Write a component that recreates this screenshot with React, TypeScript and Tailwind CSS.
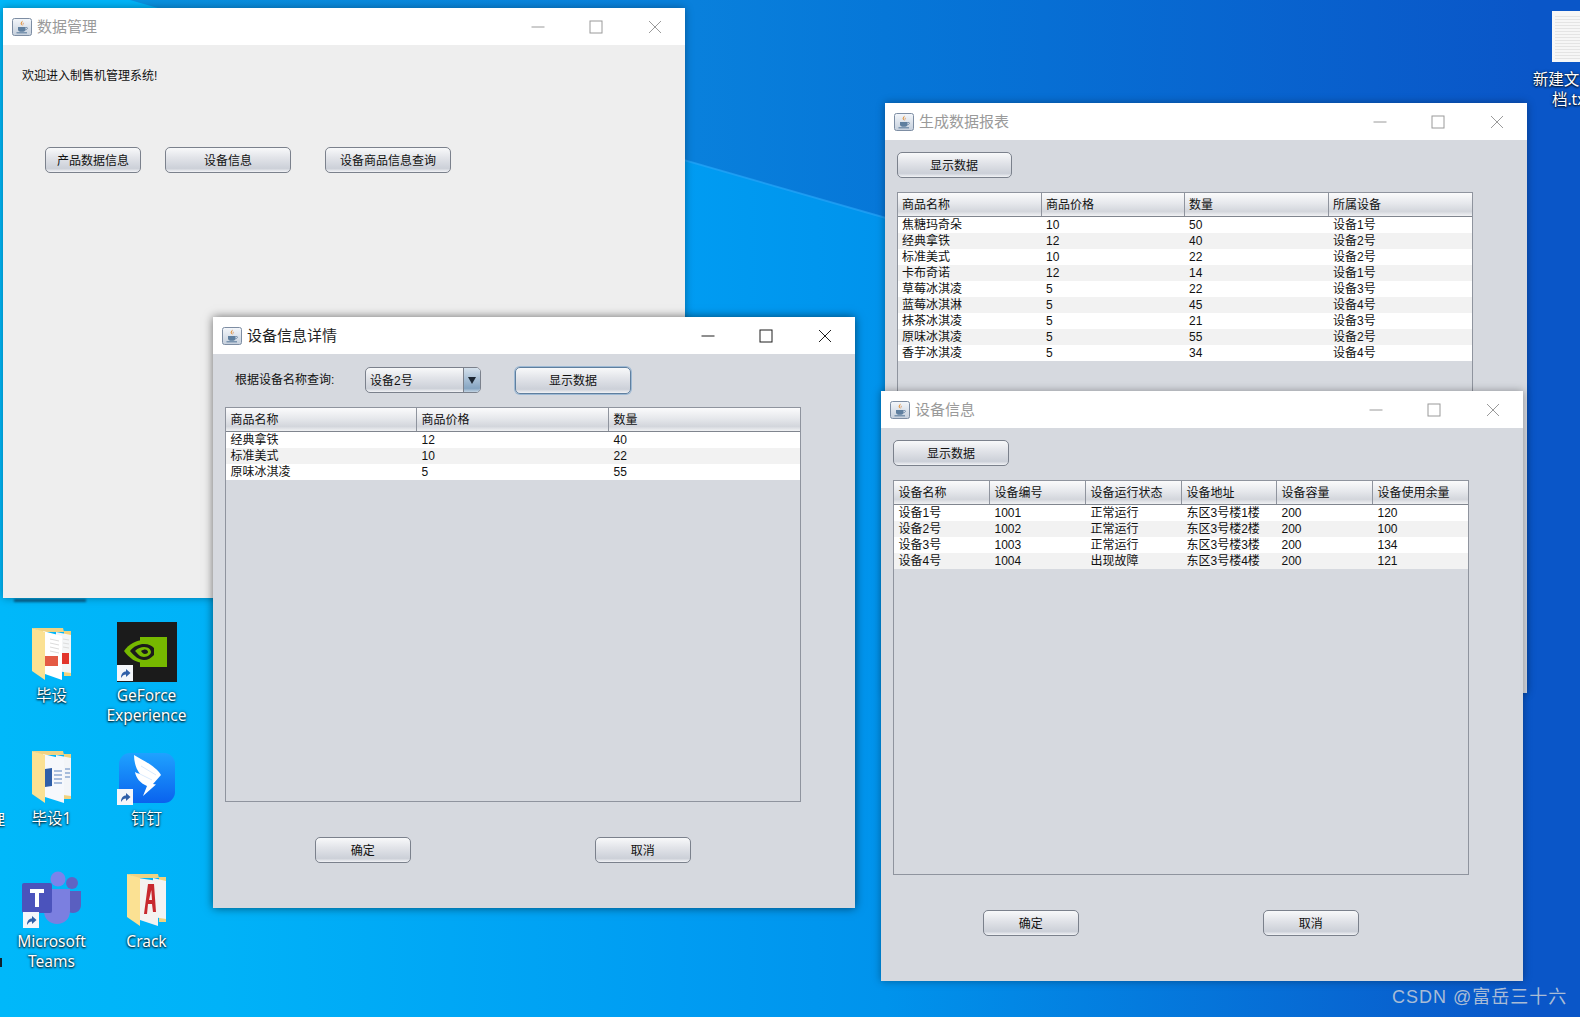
import React from 'react';

const uiFont = "font-['Liberation_Sans','Noto_Sans_CJK_SC',sans-serif]";
const desktopFont = "font-['Noto_Sans','Noto_Sans_CJK_SC',sans-serif]";

const JavaIcon: React.FC = () => (
  <svg width="20" height="18" viewBox="0 0 20 18" className="shrink-0">
    <defs>
      <linearGradient id="javaBg" x1="0" y1="0" x2="0" y2="1">
        <stop offset="0" stopColor="#f4f7fb" />
        <stop offset="1" stopColor="#c5cfdc" />
      </linearGradient>
    </defs>
    <rect x="0.5" y="0.5" width="19" height="17" rx="2" fill="url(#javaBg)" stroke="#7d8da3" />
    <path d="M10 2.500c1.600 1.300-1.200 2.400 0 4 .3.400.6.800.8 1.200-1.800-.7-2.800-2-1.800-3.200.6-.7 1.200-1.200 1-2z" fill="#e08a2c" />
    <path d="M11.500 4.500c.5.900-.8 1.700-.2 2.800-.8-.6-.9-1.900.2-2.800z" fill="#d9762a" />
    <path d="M6 9h7.500v2.500c0 1.500-1.300 2.300-3.700 2.300S6 13 6 11.500z" fill="#5f7f9f" />
    <path d="M13.500 9.500h1.300c1 0 1 2-1.500 2.400" fill="none" stroke="#5f7f9f" strokeWidth="0.8" />
    <path d="M4.500 14.800h10.500" stroke="#5f7f9f" strokeWidth="1.100" />
  </svg>
);

const WindowControls: React.FC<{ active?: boolean }> = ({ active }) => {
  const color = active ? '#1f1f1f' : '#9a9a9a';
  return (
    <div className="ml-auto flex h-full pr-[1px]">
      <div className="flex h-full w-[58.5px] items-center justify-center">
        <svg width="14" height="14" viewBox="0 0 14 14">
          <path d="M0.500 7h13" stroke={color} strokeWidth="1" />
        </svg>
      </div>
      <div className="flex h-full w-[58.5px] items-center justify-center">
        <svg width="14" height="14" viewBox="0 0 14 14">
          <rect x="1" y="1" width="12" height="12" fill="none" stroke={color} strokeWidth="1" />
        </svg>
      </div>
      <div className="flex h-full w-[58.5px] items-center justify-center">
        <svg width="14" height="14" viewBox="0 0 14 14">
          <path d="M1 1l12 12M13 1L1 13" stroke={color} strokeWidth="1" />
        </svg>
      </div>
    </div>
  );
};

type WinProps = {
  title: string;
  className: string;
  bodyClassName?: string;
  active?: boolean;
  children: React.ReactNode;
};

const JavaWindow: React.FC<WinProps> = ({ title, className, bodyClassName = 'bg-[#d6d9df]', active, children }) => (
  <div className={`absolute flex flex-col ${className} ${active ? 'shadow-[0_0_9px_rgba(0,0,0,0.55)]' : 'shadow-[0_0_8px_rgba(0,0,0,0.35)]'}`}>
    <div className="flex h-[37px] shrink-0 items-center bg-white pl-[9px]">
      <JavaIcon />
      <span className={`ml-[5px] text-[15px] ${desktopFont} ${active ? 'text-[#1f1f1f]' : 'text-[#9a9a9a]'}`}>{title}</span>
      <WindowControls active={active} />
    </div>
    <div className={`min-h-0 flex-1 text-[12px] leading-[16px] text-[#111] ${uiFont} ${bodyClassName}`}>{children}</div>
  </div>
);

const NimbusButton: React.FC<{ label: string; className: string; focused?: boolean }> = ({ label, className, focused }) => (
  <button
    className={`flex h-[26px] shrink-0 items-center justify-center rounded-[5px] border bg-[linear-gradient(#f8f9fa,#e2e4e9_40%,#ccd0d8_85%,#f2f3f6)] pt-[1px] text-[12px] text-[#111] ${className} ${
      focused ? 'border-[#5f7f9f] shadow-[0_0_0_1px_#9db9d4]' : 'border-[#7b818c]'
    }`}
  >
    {label}
  </button>
);

const DataTable: React.FC<{ cols: string; head: string[]; rows: string[][]; className: string }> = ({ cols, head, rows, className }) => (
  <div className={`h-[395px] border border-[#8f949e] ${className}`}>
    <div className={`grid h-[24px] border-b border-[#80858e] bg-[linear-gradient(#fbfbfc,#e6e8ec_45%,#d3d6dc_80%,#f1f2f4)] ${cols}`}>
      {head.map((h, i) => (
        <div key={h} className={`flex items-center pl-[4.5px] ${i < head.length - 1 ? 'border-r border-[#8f949e]' : ''}`}>
          {h}
        </div>
      ))}
    </div>
    {rows.map((row, r) => (
      <div key={r} className={`grid h-[16px] ${cols} ${r % 2 === 0 ? 'bg-white' : 'bg-[#f2f2f2]'}`}>
        {row.map((cell, c) => (
          <div key={c} className="whitespace-nowrap pl-[4.5px]">
            {cell}
          </div>
        ))}
      </div>
    ))}
  </div>
);

const ShortcutBadge: React.FC<{ x?: number; y?: number }> = ({ x = 0, y = 44 }) => (
  <g transform={`translate(${x} ${y})`}>
    <rect width="16" height="16" fill="#f4f6fa" />
    <path d="M4 13c0-4 2-6.500 5-6.500V4l4.500 4L9 12V9.500c-2 0-3.500 1-5 3.500z" fill="#2f5fa8" />
  </g>
);

const Folder: React.FC<{ children: React.ReactNode }> = ({ children }) => (
  <svg width="60" height="60" viewBox="0 0 60 60">
    <path d="M10 6h31l1 4H20z" fill="#efd283" />
    <path d="M42 9h7v45h-7z" fill="#f0d27e" />
    {children}
    <path d="M10 6l13 4v48l-13-9z" fill="#fbe193" />
  </svg>
);

const PdfFolder: React.FC = () => (
  <Folder>
    <path d="M34 10l15 3v38l-15-2z" fill="#f3f5f6" />
    <rect x="39" y="31" width="8" height="11" fill="#e2352b" />
    <path d="M21 9l19 5v44l-17-6z" fill="#fff" />
    <rect x="23" y="34" width="13" height="10" fill="#e45a44" />
    <path d="M28 17l9 2M28 21l9 2M28 25l9 2M28 29l9 2M41 17l6 1M41 21l6 1M41 25l6 1" stroke="#dcdcdc" strokeWidth="1" />
  </Folder>
);

const WordFolder: React.FC = () => (
  <Folder>
    <path d="M34 10l15 3v38l-15-2z" fill="#f3f5f8" />
    <path d="M21 9l21 5v44l-19-6z" fill="#f6f8fc" />
    <path d="M23 24l7-1v18l-7 1z" fill="#2f5fa8" />
    <path d="M32 26h8M32 30h8M32 34h8M32 38h8M43 24h5M43 28h5M43 32h5" stroke="#5b83bf" strokeWidth="1" />
  </Folder>
);

const CadFolder: React.FC = () => (
  <Folder>
    <path d="M36 10l13 3v38l-13-2z" fill="#f3f3f3" />
    <path d="M21 10l20 3v45l-18-6z" fill="#f4f2f0" />
    <path d="M27 46l4-30h6l2 28h-3l-1-8h-4l-1 10zM32 32h3l-.7-10z" fill="#c8282e" fillRule="evenodd" />
  </Folder>
);

const NvidiaIcon: React.FC = () => (
  <svg width="60" height="60" viewBox="0 0 60 60">
    <rect width="60" height="60" fill="#1b1b1b" />
    <rect x="23" y="15" width="27" height="30" fill="#76b900" />
    <path d="M7 29c5-7 12-11 20-11 4 0 7 1 10 2v19c-3 1-6 2-10 2-8 0-15-5-20-12z" fill="#76b900" />
    <path d="M13 29c4-5 9-7 14-7 5 0 8 2 10 4v7c-3 3-6 5-10 5-5 0-10-4-14-9z" fill="#1b1b1b" />
    <path d="M18 29c3-3 6-4 9-4 5 0 7 3 7 5s-3 5-7 5c-4 0-6-3-9-6z" fill="#76b900" />
    <path d="M24 29c1.500-1 3-1.500 4-1.500 2 0 3 1.500 3 2.500s-1.500 2-3 2c-2 0-3-2-4-3z" fill="#1b1b1b" />
    <ShortcutBadge y={43} />
  </svg>
);

const DingTalkIcon: React.FC = () => (
  <svg width="60" height="60" viewBox="0 0 60 60">
    <defs>
      <linearGradient id="dingBg" x1="0" y1="0" x2="0" y2="1">
        <stop offset="0" stopColor="#1fa2ff" />
        <stop offset="1" stopColor="#0a62ee" />
      </linearGradient>
    </defs>
    <rect x="2" y="8" width="56" height="50" rx="11" fill="url(#dingBg)" />
    <path d="M17 10c8 5 22 11 27 20l-8 9 3 .5-13 11.500 4-10c-7-3-11-8-12-14 2 1 3 1.500 5 2-4-5-6-12-6-19z" fill="#fff" />
    <path d="M24 21l15 9M23 29l12 6" stroke="#cfe4fc" strokeWidth="0.8" />
    <ShortcutBadge y={44} />
  </svg>
);

const TeamsIcon: React.FC = () => (
  <svg width="60" height="60" viewBox="0 0 60 60">
    <circle cx="50" cy="15" r="6" fill="#5f64c4" />
    <path d="M44 23h15v14c0 5-4 8-8 8-3 0-5-1-7-3z" fill="#5a5fc0" />
    <circle cx="36" cy="11" r="7.500" fill="#7b83eb" />
    <path d="M22 21h26v22c0 8-6 13-13 13S22 51 22 43z" fill="#7b7fe0" />
    <rect y="15" width="30" height="30" rx="2" fill="#4b53bc" />
    <path d="M8 21h14v4h-5v14h-4V25H8z" fill="#fff" />
    <ShortcutBadge x={1} y={44} />
  </svg>
);

const TextDocIcon: React.FC = () => (
  <div className="h-[51px] w-[40px] border-[3px] border-[#f7f7f7] bg-[repeating-linear-gradient(#f6f6f6_0,#f6f6f6_2px,#e4e4e4_2px,#e4e4e4_3px)]" />
);

const DesktopIcon: React.FC<{ className: string; lines: string[]; children: React.ReactNode }> = ({ className, lines, children }) => (
  <div className={`absolute flex w-[95px] flex-col items-center ${className}`}>
    <div className="flex h-[60px] items-center justify-center">{children}</div>
    <div className={`mt-[3px] whitespace-nowrap text-center text-[15.5px] leading-[20px] text-white [text-shadow:0_1px_2px_rgba(0,0,0,0.95),0_0_3px_rgba(0,0,0,0.6)] ${desktopFont}`}>
      {lines.map((l) => (
        <div key={l}>{l}</div>
      ))}
    </div>
  </div>
);

const Wallpaper: React.FC = () => (
  <svg className="absolute inset-0" width="1580" height="1017" viewBox="0 0 1580 1017">
    <defs>
      <linearGradient id="lower" x1="0" y1="0" x2="1580" y2="0" gradientUnits="userSpaceOnUse">
        <stop offset="0" stopColor="#00b8fa" />
        <stop offset="0.14" stopColor="#00b2f8" />
        <stop offset="0.43" stopColor="#009cf2" />
        <stop offset="0.56" stopColor="#0093ec" />
        <stop offset="0.97" stopColor="#0a56c8" />
      </linearGradient>
      <linearGradient id="upper" x1="0" y1="0" x2="1580" y2="0" gradientUnits="userSpaceOnUse">
        <stop offset="0" stopColor="#0a95e0" />
        <stop offset="0.44" stopColor="#0980dc" />
        <stop offset="0.56" stopColor="#0677d8" />
        <stop offset="0.97" stopColor="#0a56c8" />
      </linearGradient>
    </defs>
    <rect width="1580" height="1017" fill="url(#lower)" />
    <polygon points="130,0 1580,418 1580,0" fill="url(#upper)" />
    <line x1="600" y1="136" x2="900" y2="222" stroke="#2aa4f7" strokeWidth="2" strokeOpacity="0.65" />
  </svg>
);

const reportRows = [
  ['焦糖玛奇朵', '10', '50', '设备1号'],
  ['经典拿铁', '12', '40', '设备2号'],
  ['标准美式', '10', '22', '设备2号'],
  ['卡布奇诺', '12', '14', '设备1号'],
  ['草莓冰淇凌', '5', '22', '设备3号'],
  ['蓝莓冰淇淋', '5', '45', '设备4号'],
  ['抹茶冰淇凌', '5', '21', '设备3号'],
  ['原味冰淇凌', '5', '55', '设备2号'],
  ['香芋冰淇凌', '5', '34', '设备4号'],
];

const detailRows = [
  ['经典拿铁', '12', '40'],
  ['标准美式', '10', '22'],
  ['原味冰淇凌', '5', '55'],
];

const deviceRows = [
  ['设备1号', '1001', '正常运行', '东区3号楼1楼', '200', '120'],
  ['设备2号', '1002', '正常运行', '东区3号楼2楼', '200', '100'],
  ['设备3号', '1003', '正常运行', '东区3号楼3楼', '200', '134'],
  ['设备4号', '1004', '出现故障', '东区3号楼4楼', '200', '121'],
];

export default function App() {
  return (
    <div className="relative h-[1017px] w-[1580px] overflow-hidden">
      <Wallpaper />

      {/* desktop icons */}
      <DesktopIcon className="left-[4px] top-[622px]" lines={['毕设']}>
        <PdfFolder />
      </DesktopIcon>
      <DesktopIcon className="left-[99px] top-[622px]" lines={['GeForce', 'Experience']}>
        <NvidiaIcon />
      </DesktopIcon>
      <DesktopIcon className="left-[4px] top-[745px]" lines={['毕设1']}>
        <WordFolder />
      </DesktopIcon>
      <DesktopIcon className="left-[99px] top-[745px]" lines={['钉钉']}>
        <DingTalkIcon />
      </DesktopIcon>
      <DesktopIcon className="left-[4px] top-[868px]" lines={['Microsoft', 'Teams']}>
        <TeamsIcon />
      </DesktopIcon>
      <DesktopIcon className="left-[99px] top-[868px]" lines={['Crack']}>
        <CadFolder />
      </DesktopIcon>
      <DesktopIcon className="left-[1524px] top-[6px]" lines={['新建文本文', '档.txt']}>
        <TextDocIcon />
      </DesktopIcon>

      {/* bits of icons cut off by the edge and by the first window */}
      <span className={`absolute left-[-10px] top-[809px] text-[15px] leading-[20px] text-white [text-shadow:0_1px_2px_rgba(0,0,0,0.95)] ${desktopFont}`}>理</span>
      <div className="absolute left-0 top-[958px] h-[9px] w-[2px] bg-[#10202c]" />
      <div className="absolute left-[14px] top-[599px] h-[3px] w-[72px] bg-[#0b3a5c]/70 blur-[1px]" />

      <JavaWindow title="数据管理" className="left-[3px] top-[8px] h-[590px] w-[682px]" bodyClassName="bg-[#eeeeee]">
        <div className="pl-[19px] pt-[23px]">欢迎进入制售机管理系统!</div>
        <div className="ml-[42px] mt-[63px] flex">
          <NimbusButton label="产品数据信息" className="w-[96px]" />
          <NimbusButton label="设备信息" className="ml-[24px] w-[126px]" />
          <NimbusButton label="设备商品信息查询" className="ml-[34px] w-[126px]" />
        </div>
      </JavaWindow>

      <JavaWindow title="生成数据报表" className="left-[885px] top-[103px] h-[590px] w-[642px]">
        <div className="pl-[11.5px] pt-[12px]">
          <NimbusButton label="显示数据" className="w-[115px]" />
          <DataTable
            className="mt-[14px] w-[576px]"
            cols="grid-cols-[144px_143px_144px_1fr]"
            head={['商品名称', '商品价格', '数量', '所属设备']}
            rows={reportRows}
          />
        </div>
      </JavaWindow>

      <JavaWindow title="设备信息详情" className="left-[213px] top-[317px] h-[591px] w-[642px]" active>
        <div className="pl-[12px] pt-[12px]">
          <div className="flex h-[28px] items-center pl-[10px]">
            <span className="w-[130px] shrink-0">根据设备名称查询:</span>
            <div className="flex h-[26px] w-[116px] overflow-hidden rounded-[5px] border border-[#7b818c] bg-[linear-gradient(#f8f9fa,#e2e4e9_40%,#ccd0d8_85%,#f2f3f6)]">
              <span className="flex flex-1 items-center pl-[4px] pt-[1px]">设备2号</span>
              <div className="flex w-[17px] items-center justify-center border-l border-[#7b818c] bg-[linear-gradient(#d5e1ec,#a9c0d6_45%,#86a5c2_85%,#c3d4e3)]">
                <svg width="8" height="7" viewBox="0 0 8 7">
                  <polygon points="0,0 8,0 4,7" fill="#1c2733" />
                </svg>
              </div>
            </div>
            <NimbusButton label="显示数据" className="ml-[34px] h-[27px] w-[116px]" focused />
          </div>
          <DataTable
            className="mt-[13px] w-[576px]"
            cols="grid-cols-[191px_192px_1fr]"
            head={['商品名称', '商品价格', '数量']}
            rows={detailRows}
          />
          <div className="mt-[35px] flex pl-[90px]">
            <NimbusButton label="确定" className="w-[95.5px]" />
            <NimbusButton label="取消" className="ml-[184.5px] w-[95.5px]" />
          </div>
        </div>
      </JavaWindow>

      <JavaWindow title="设备信息" className="left-[881px] top-[391px] h-[590px] w-[642px]">
        <div className="pl-[12px] pt-[12px]">
          <NimbusButton label="显示数据" className="w-[116px]" />
          <DataTable
            className="mt-[14px] w-[575.5px]"
            cols="grid-cols-[96px_96px_96px_95px_96px_1fr]"
            head={['设备名称', '设备编号', '设备运行状态', '设备地址', '设备容量', '设备使用余量']}
            rows={deviceRows}
          />
          <div className="mt-[35px] flex pl-[90px]">
            <NimbusButton label="确定" className="w-[95.5px]" />
            <NimbusButton label="取消" className="ml-[184.5px] w-[95.5px]" />
          </div>
        </div>
      </JavaWindow>

      <span className={`absolute left-[1392px] top-[985px] whitespace-nowrap text-[18px] leading-[24px] tracking-[1px] text-[#a9bcd6] ${uiFont}`}>CSDN @富岳三十六</span>
    </div>
  );
}
